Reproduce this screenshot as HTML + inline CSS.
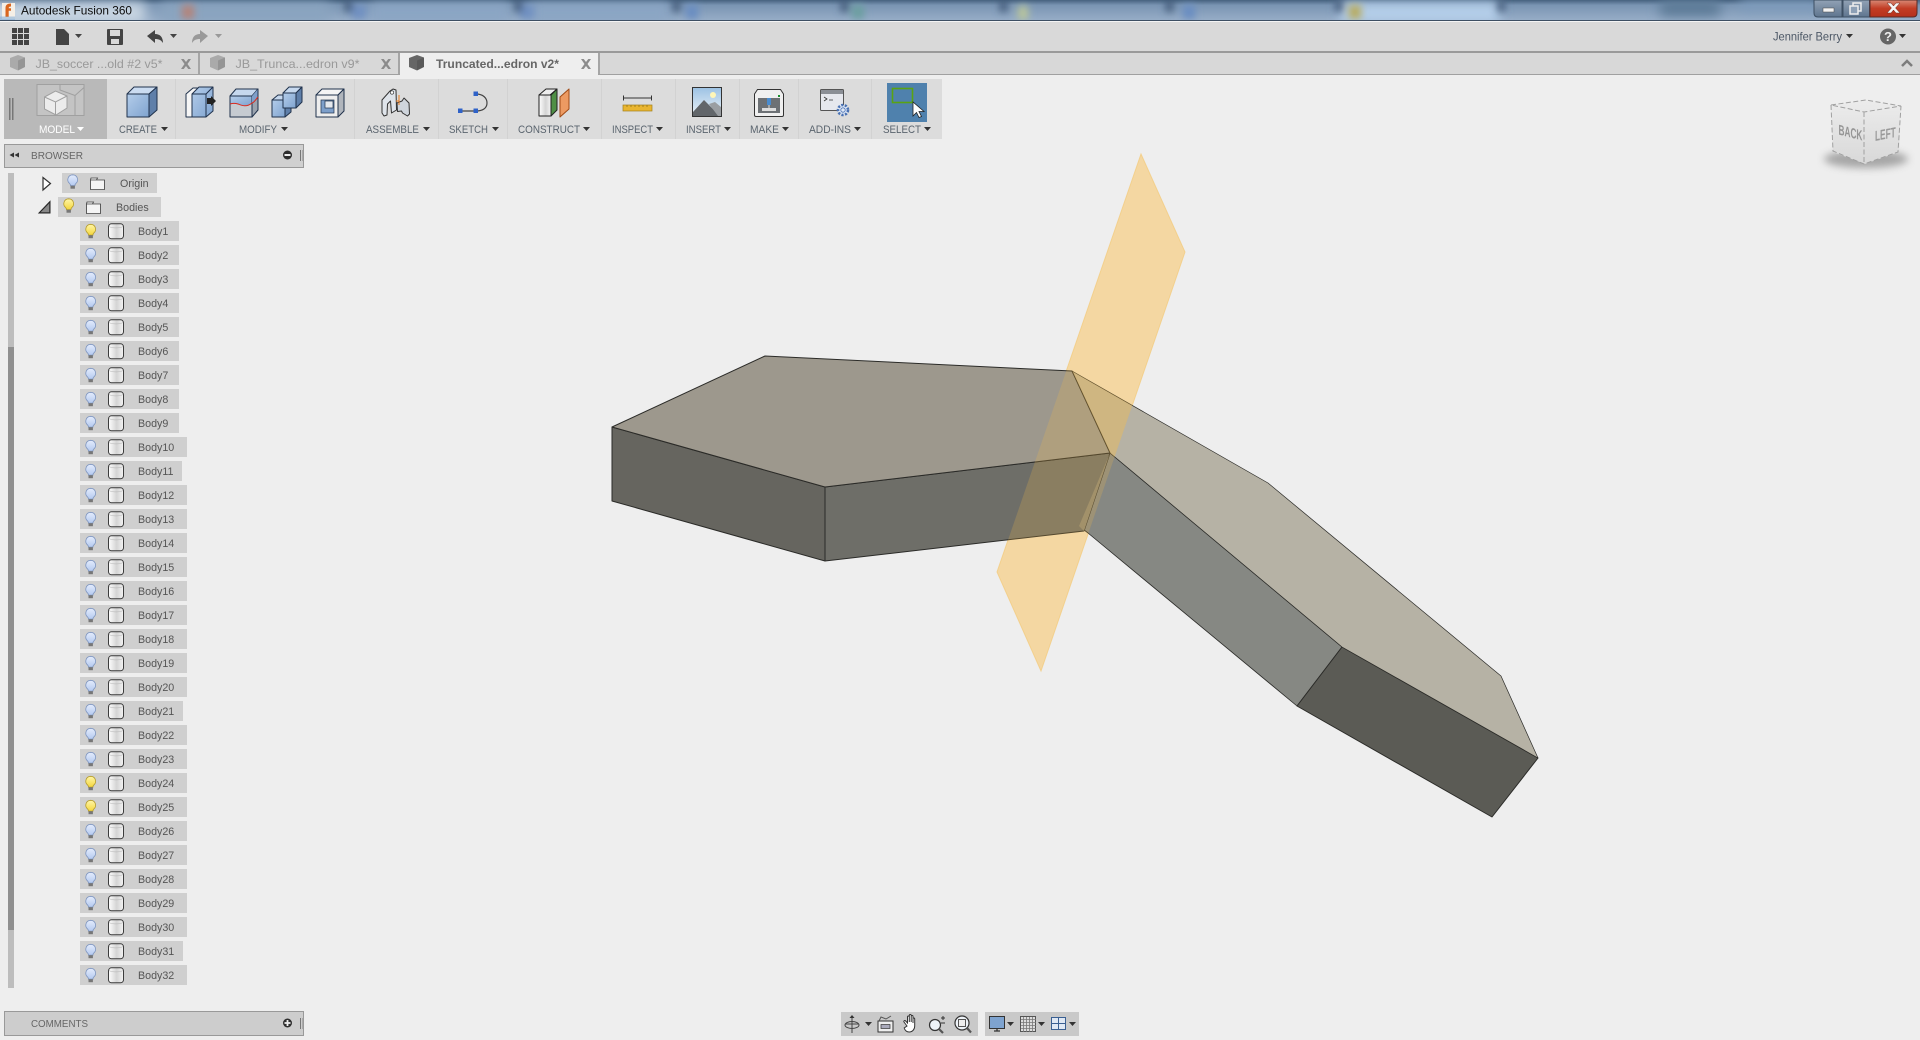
<!DOCTYPE html>
<html><head><meta charset="utf-8"><title>Autodesk Fusion 360</title>
<style>
html,body{margin:0;padding:0;background:#eee;overflow:hidden}
svg{display:block;filter:blur(.3px)}
text{font-family:"Liberation Sans",sans-serif}
.l{font-size:11px;fill:#5a646e}
.t{font-size:10.7px;fill:#555}
.r{fill:#cfcfcf}
</style></head><body>
<svg xmlns="http://www.w3.org/2000/svg" width="1920" height="1040" viewBox="0 0 1920 1040">
<defs>
<linearGradient id="fb" x1="0" y1="0" x2="1" y2="1"><stop offset="0" stop-color="#b4cdea"/><stop offset="1" stop-color="#7fa3cf"/></linearGradient>
<linearGradient id="bl" x1="0" y1="0" x2="0" y2="1"><stop offset="0" stop-color="#e4ecfc"/><stop offset="1" stop-color="#b4caf0"/></linearGradient>
<linearGradient id="yl" x1="0" y1="0" x2="0" y2="1"><stop offset="0" stop-color="#fff6a8"/><stop offset="1" stop-color="#f4d63c"/></linearGradient>
<linearGradient id="cg" x1="0" y1="0" x2="1" y2="0"><stop offset="0" stop-color="#fff"/><stop offset=".55" stop-color="#d4d4d4"/><stop offset="1" stop-color="#f4f4f4"/></linearGradient>
<linearGradient id="sky" x1="0" y1="0" x2="0" y2="1"><stop offset="0" stop-color="#9cc2e4"/><stop offset="1" stop-color="#eef4f8"/></linearGradient>
<linearGradient id="cube" x1="0" y1="0" x2="0" y2="1"><stop offset="0" stop-color="#ececec"/><stop offset="1" stop-color="#d8d8d8"/></linearGradient>
<linearGradient id="wb" x1="0" y1="0" x2="0" y2="1"><stop offset="0" stop-color="#92a2b5"/><stop offset="1" stop-color="#5f758f"/></linearGradient>
<linearGradient id="wc" x1="0" y1="0" x2="0" y2="1"><stop offset="0" stop-color="#d98a76"/><stop offset=".5" stop-color="#c23c24"/><stop offset="1" stop-color="#b5301c"/></linearGradient>
<linearGradient id="tb" x1="0" y1="0" x2="0" y2="1"><stop offset="0" stop-color="#46627f"/><stop offset=".25" stop-color="#7a95b3"/><stop offset="1" stop-color="#98aec8"/></linearGradient>
<filter id="b4" x="-30%" y="-100%" width="160%" height="300%"><feGaussianBlur stdDeviation="4"/></filter>
<filter id="b7" x="-30%" y="-100%" width="160%" height="300%"><feGaussianBlur stdDeviation="6"/></filter>
<clipPath id="tc"><rect x="0" y="0" width="1920" height="20.500"/></clipPath>
<clipPath id="rt"><polygon points="1072,371 1268,483 1501,676 1538,758 1342,647 1110,453"/></clipPath>
<g id="bb"><path d="M90.700 3.300a4.900 4.900 0 0 1 3.200 8.600c-.8.8-1 1.500-1 2.300h-4.400c0-.8-.2-1.500-1-2.300a4.900 4.900 0 0 1 3.200-8.600z" fill="url(#bl)" stroke="#7f96c0" stroke-width=".8"/><rect x="88.500" y="14.200" width="4.400" height="3" fill="#777"/></g>
<g id="by"><path d="M90.700 3.300a4.900 4.900 0 0 1 3.200 8.600c-.8.8-1 1.500-1 2.300h-4.400c0-.8-.2-1.500-1-2.300a4.900 4.900 0 0 1 3.200-8.600z" fill="url(#yl)" stroke="#b59c2c" stroke-width=".8"/><rect x="88.500" y="14.200" width="4.400" height="3" fill="#777"/></g>
<g id="cy"><rect x="108.500" y="2.800" width="15" height="15" rx="3" fill="url(#cg)" stroke="#3c3c3c" stroke-width="1"/><path d="M109 5.500c3 1.800 11 1.800 14 0" fill="none" stroke="#bbb" stroke-width=".7"/></g>
<g id="fo"><path d="M.5 2.500h6l1-2h-6.500zM.5 2.500h14v9.500h-14z" fill="#f4f4f4" stroke="#444" stroke-width=".85"/></g>
<path id="ar" d="M0 0h7l-3.500 4z"/>
<g id="tcube"><path d="M0 3l8-3 7 2.500v9.500l-7 3.500-8-3.500z" fill="currentColor"/><path d="M8 5.500l7-3v9.500l-7 3.500z" fill="#000" opacity=".12"/></g>
<path id="xx" d="M-5-5h2.700L0-2 2.300-5H5L1.500 0 5 5H2.300L0 2-2.300 5H-5L-1.500 0z"/>
</defs>

<rect width="1920" height="1040" fill="#eee"/>

<!-- title bar -->
<g clip-path="url(#tc)">
<rect width="1920" height="21" fill="url(#tb)"/>
<g filter="url(#b7)">
<rect x="-20" y="2" width="165" height="22" fill="#c8d5e2"/>
<rect x="160" y="3" width="170" height="20" fill="#8aa4c0"/>
<rect x="370" y="3" width="140" height="20" fill="#8ba6c5"/>
<rect x="530" y="3" width="140" height="20" fill="#8ba6c5"/>
<rect x="1340" y="2" width="160" height="22" fill="#b5cfea"/>
<rect x="1660" y="0" width="60" height="16" fill="#5a7894"/>
<rect x="1740" y="0" width="80" height="10" fill="#7e9cbd"/>
</g>
<g filter="url(#b4)">
<rect x="182" y="5" width="12" height="14" fill="#b58378"/>
<rect x="352" y="5" width="14" height="14" fill="#6f90c2"/>
<rect x="520" y="5" width="14" height="14" fill="#6f90c2"/>
<rect x="686" y="5" width="12" height="14" fill="#688cc2"/>
<rect x="852" y="5" width="12" height="14" fill="#6a9f9f"/>
<rect x="1018" y="6" width="10" height="14" fill="#bcc79a"/>
<rect x="1183" y="5" width="12" height="14" fill="#688cc2"/>
<rect x="1349" y="5" width="12" height="14" fill="#b8aa5c"/>
<rect x="345" y="0" width="7" height="12" fill="#3c5473"/>
<rect x="515" y="0" width="7" height="12" fill="#3c5473"/>
<rect x="673" y="0" width="7" height="12" fill="#3c5473"/>
<rect x="841" y="0" width="7" height="12" fill="#3c5473"/>
<rect x="1000" y="0" width="7" height="12" fill="#3c5473"/>
<rect x="1166" y="0" width="7" height="12" fill="#3c5473"/>
<rect x="1335" y="0" width="7" height="12" fill="#3c5473"/>
<rect x="1498" y="0" width="7" height="12" fill="#3c5473"/>
</g>
</g>
<rect y="20" width="1920" height="1" fill="#3d4f63"/>
<rect y="21" width="1920" height="1" fill="#f4f4f4"/>
<!-- app icon -->
<rect x="2" y="3" width="13" height="16" fill="#f5efe6"/>
<path d="M5.500 17V8c0-3 1.800-4.500 5.500-4.500V6.500c-1.700 0-2.300.5-2.300 1.700H11v2.600H8.700V17z" fill="#d9661f"/>
<rect x="0" y="16.500" width="15" height="3.500" fill="#8fb3d9" opacity=".65"/>
<text x="21" y="14.500" font-size="12" fill="#0c0c0c" textLength="111" lengthAdjust="spacingAndGlyphs">Autodesk Fusion 360</text>
<!-- window buttons -->
<path d="M1814 0v13q0 4 4 4h24V0z" fill="url(#wb)" stroke="#3d4f63"/>
<path d="M1843 0h26.500v17H1843z" fill="url(#wb)" stroke="#3d4f63"/>
<path d="M1870 0h47v13q0 4-4 4h-43z" fill="url(#wc)" stroke="#5b2a24"/>
<rect x="1823" y="8" width="11" height="4" fill="#f2f2f2" stroke="#444" stroke-width=".5"/>
<rect x="1853" y="3" width="8" height="8" fill="none" stroke="#eee" stroke-width="1.500"/><rect x="1850" y="6" width="8" height="8" fill="#8da0b6" stroke="#eee" stroke-width="1.500"/>
<path d="M1887 3h4l2.500 3 2.500-3h4l-4.500 5 4.500 5h-4l-2.500-3-2.500 3h-4l4.500-5z" fill="#f5f5f5" stroke="#6e2a20" stroke-width=".5"/>

<!-- quick access -->
<rect y="22" width="1920" height="30" fill="#d9d9d9"/>
<rect y="51" width="1920" height="2" fill="#9a9a9a"/>
<g fill="#444">
<rect x="12" y="28" width="5" height="5"/><rect x="18" y="28" width="5" height="5"/><rect x="24" y="28" width="5" height="5"/>
<rect x="12" y="34" width="5" height="5"/><rect x="18" y="34" width="5" height="5"/><rect x="24" y="34" width="5" height="5"/>
<rect x="12" y="40" width="5" height="5"/><rect x="18" y="40" width="5" height="5"/><rect x="24" y="40" width="5" height="5"/>
<path d="M56 29h8l5 5v11H56z"/>
<use href="#ar" x="75" y="34"/>
<path d="M107 30q0-1 1-1h14q1 0 1 1v14q0 1-1 1h-14q-1 0-1-1z"/>
<path d="M147 36l8-6v4c5 0 8 3 8 9-2-3-4-4-8-4v4z"/>
<use href="#ar" x="170" y="34"/>
</g>
<rect x="110" y="30" width="10" height="6" fill="#d9d9d9"/><rect x="111" y="39" width="8" height="5" fill="#d9d9d9"/>
<path d="M208 36l-8-6v4c-5 0-8 3-8 9 2-3 4-4 8-4v4z" fill="#999"/>
<use href="#ar" x="215" y="34" fill="#999"/>
<text x="1773" y="40.500" font-size="12" fill="#4d5866" textLength="69" lengthAdjust="spacingAndGlyphs">Jennifer Berry</text>
<use href="#ar" x="1846" y="34" fill="#333"/>
<circle cx="1888" cy="36.500" r="8" fill="#666"/>
<text x="1888" y="41" font-size="13" font-weight="bold" fill="#eee" text-anchor="middle">?</text>
<use href="#ar" x="1899" y="34" fill="#333"/>

<!-- tabs -->
<rect y="53" width="1920" height="21" fill="#d8d8d8"/>
<rect y="74" width="1920" height="1" fill="#a0a0a0"/>
<rect x="0" y="53" width="198" height="21" fill="#d6d6d6"/>
<rect x="198" y="53" width="2" height="21" fill="#a5a5a5"/>
<rect x="398" y="53" width="2" height="21" fill="#a5a5a5"/>
<rect x="400" y="53" width="198" height="22" fill="#eee"/>
<rect x="598" y="53" width="2" height="21" fill="#a5a5a5"/>
<use href="#tcube" x="10" y="55" style="color:#aaa"/>
<use href="#tcube" x="210" y="55" style="color:#aaa"/>
<use href="#tcube" x="409" y="55" style="color:#666"/>
<text x="35.500" y="68" font-size="12" fill="#999" textLength="127" lengthAdjust="spacingAndGlyphs">JB_soccer ...old #2 v5*</text>
<text x="235.500" y="68" font-size="12" fill="#999" textLength="124" lengthAdjust="spacingAndGlyphs">JB_Trunca...edron v9*</text>
<text x="436" y="68" font-size="12" font-weight="bold" fill="#666" textLength="123" lengthAdjust="spacingAndGlyphs">Truncated...edron v2*</text>
<use href="#xx" x="186" y="64" fill="#8c8c8c"/>
<use href="#xx" x="386" y="64" fill="#8c8c8c"/>
<use href="#xx" x="586" y="64" fill="#8c8c8c"/>
<path d="M1902 66l5-5 5 5" fill="none" stroke="#7d7d7d" stroke-width="2.500"/>

<!-- ribbon -->
<rect x="4" y="79" width="938" height="60" fill="#dcdcdc"/>
<rect x="4" y="79" width="103" height="60" fill="#b9b9b9"/>
<g fill="#d2d2d2"><rect x="175" y="79" width="1" height="60"/><rect x="354" y="79" width="1" height="60"/><rect x="438" y="79" width="1" height="60"/><rect x="507" y="79" width="1" height="60"/><rect x="601" y="79" width="1" height="60"/><rect x="675" y="79" width="1" height="60"/><rect x="739" y="79" width="1" height="60"/><rect x="798" y="79" width="1" height="60"/><rect x="871" y="79" width="1" height="60"/></g>
<rect x="9" y="98" width="1.500" height="22" fill="#777"/><rect x="12" y="98" width="1.500" height="22" fill="#777"/>
<!-- model icon -->
<rect x="37" y="84.500" width="47" height="31" fill="#c4c4c4" stroke="#a0a0a0"/>
<path d="M60 84v6l15 5.500v20M75 95.500l9-8" fill="none" stroke="#a0a0a0"/>
<path d="M44.500 97l11-6 11.500 5v12l-11 7-11.500-6z" fill="#ececec" stroke="#a0a0a0"/>
<path d="M44.500 97l11 5 11.500-6M55.500 102v13" fill="none" stroke="#a0a0a0"/>
<text x="39" y="133" class="l" style="fill:#fff" textLength="36" lengthAdjust="spacingAndGlyphs">MODEL</text>
<use href="#ar" x="77" y="127" fill="#fff"/>
<!-- create -->
<g stroke="#20324c" stroke-width="1" stroke-linejoin="round"><path d="M127 94l7-7h23l-8 7z" fill="#cbdcf1"/><path d="M149 94l8-7v23l-8 7z" fill="#5f7fa9"/><rect x="127" y="94" width="22" height="23" fill="url(#fb)"/></g>
<text x="119" y="133" class="l" textLength="38" lengthAdjust="spacingAndGlyphs">CREATE</text><use href="#ar" x="161" y="127" fill="#333"/>
<!-- press pull -->
<g stroke="#20324c" stroke-linejoin="round"><path d="M186 94l7-6h8v29h-15z" fill="#f6f6f6"/><path d="M192 94l7-7h14v24l-7 6h-14z" fill="url(#fb)"/><path d="M192 94h14l7-7M206 94v23" fill="none"/></g>
<path d="M207 98h4v-2l5 5-5 5v-2h-4z" fill="#222"/>
<!-- fillet -->
<g stroke="#20324c" stroke-linejoin="round"><path d="M230 96l6-7h22l-6 7z" fill="#c6d8ee"/><path d="M252 96l6-7v21l-6 7z" fill="#9aa3ae"/><rect x="230" y="96" width="22" height="21" fill="#c6cbd1"/></g>
<path d="M230.500 96.500h21v7c-6 3-9 2-13 1s-5-1-8 0z" fill="url(#fb)"/><path d="M252 96l5.500-6.500v8c-2 2-3 4-5.500 5.500z" fill="#7f9fc9"/>
<path d="M230 104c3-1 5-1 8 0s8 4 14-1c3-1 4-4 6-6" fill="none" stroke="#d92b1f" stroke-width="1"/>
<!-- combine -->
<g stroke="#20324c" stroke-linejoin="round">
<path d="M272 100l6-5h13l-6 5z" fill="#c6d8ee"/><path d="M285 100l6-5v17l-6 5z" fill="#5f7fa9"/><rect x="272" y="100" width="13" height="17" fill="url(#fb)"/>
<path d="M283 93l6-6h13l-6 6z" fill="#c6d8ee"/><path d="M296 93l6-6v15l-6 6z" fill="#5f7fa9"/><rect x="283" y="93" width="13" height="15" fill="url(#fb)"/></g>
<!-- shell -->
<g stroke="#20324c" stroke-linejoin="round"><path d="M316 95l6-6h22l-6 6z" fill="#f4f4f4"/><path d="M338 95l6-6v22l-6 6z" fill="#b0b5bc"/><rect x="316" y="95" width="22" height="22" fill="#eee"/></g>
<rect x="321" y="100" width="13" height="13" fill="#7d9fca" stroke="#20324c" stroke-width=".7"/><rect x="325" y="101" width="8" height="7" fill="#e4e8ee" stroke="#20324c" stroke-width=".7"/>
<text x="239" y="133" class="l" textLength="38" lengthAdjust="spacingAndGlyphs">MODIFY</text><use href="#ar" x="281" y="127" fill="#333"/>
<!-- assemble -->
<g stroke="#333" stroke-linejoin="round"><path d="M382 100l8-9 3-2 3 1 .5 20-5 3-1-12-3 3-.5 11-3 1-2-3z" fill="#dfe4ea"/><path d="M397 103l5-2 2-3 5 5 .5 11-2 2-5-3-1-2-4 .5z" fill="#cfd5dc"/></g>
<circle cx="392" cy="92.500" r="1.700" fill="#fff" stroke="#222" stroke-width=".6"/>
<path d="M399 95v10M396 101h3" stroke="#e87b1e" stroke-width="1" fill="none"/>
<text x="366" y="133" class="l" textLength="53" lengthAdjust="spacingAndGlyphs">ASSEMBLE</text><use href="#ar" x="423" y="127" fill="#333"/>
<!-- sketch -->
<path d="M460 111h16M476 94c7 0 11 4 11 9s-4 8-11 8" fill="none" stroke="#444" stroke-width="1.200"/>
<rect x="458" y="108.500" width="4.500" height="4.500" fill="#2f62c8"/><rect x="473.500" y="108.500" width="4.500" height="4.500" fill="#2f62c8"/><rect x="473.500" y="91.500" width="4.500" height="4.500" fill="#2f62c8"/>
<text x="449" y="133" class="l" textLength="39" lengthAdjust="spacingAndGlyphs">SKETCH</text><use href="#ar" x="492" y="127" fill="#333"/>
<!-- construct -->
<g stroke="#222" stroke-linejoin="round"><path d="M539 95l7-6h11l-7 6z" fill="#eee"/><rect x="539" y="95" width="12" height="21" fill="url(#cg)"/><path d="M551 95l6-6v21l-6 6z" fill="#4f8f45"/><path d="M560 97l9-8v20l-9 8z" fill="#ec9a62" stroke="#a04a16"/></g>
<text x="518" y="133" class="l" textLength="62" lengthAdjust="spacingAndGlyphs">CONSTRUCT</text><use href="#ar" x="583" y="127" fill="#333"/>
<!-- inspect -->
<path d="M623.500 95.500v5M651.500 95.500v5M623.500 98h28" stroke="#333" fill="none"/>
<rect x="623" y="105" width="29" height="6" fill="#e9b530" stroke="#a17f1c" stroke-width=".7"/>
<path d="M627 105v2M631 105v2M635 105v2M639 105v2M643 105v2M647 105v2" stroke="#8a6c14" stroke-width=".7"/>
<text x="612" y="133" class="l" textLength="41" lengthAdjust="spacingAndGlyphs">INSPECT</text><use href="#ar" x="656" y="127" fill="#333"/>
<!-- insert -->
<rect x="692.500" y="87.500" width="29" height="29" fill="url(#sky)" stroke="#333"/>
<path d="M693 116v-4l11-12 16 16z" fill="#62666a"/><path d="M709 104l6-2 6 5v9h-3z" fill="#9a9ea2"/>
<circle cx="713" cy="95" r="3" fill="#fff6b8"/>
<text x="686" y="133" class="l" textLength="35" lengthAdjust="spacingAndGlyphs">INSERT</text><use href="#ar" x="724" y="127" fill="#333"/>
<!-- make -->
<path d="M754.500 94l3-4.500h23l3 4.500v21q0 1.500-1.500 1.500h-26q-1.500 0-1.500-1.500z" fill="#f0f0f0" stroke="#333"/>
<rect x="758" y="98" width="22" height="15" fill="#6d7175"/>
<rect x="767" y="98" width="4" height="7" fill="#4a8ccf"/><path d="M769 105v3" stroke="#ddd"/><rect x="762" y="108" width="14" height="3" fill="#ddd"/>
<rect x="778" y="95" width="2" height="2" fill="#1a8f2e"/>
<text x="750" y="133" class="l" textLength="29" lengthAdjust="spacingAndGlyphs">MAKE</text><use href="#ar" x="782" y="127" fill="#333"/>
<!-- add-ins -->
<rect x="820.500" y="89.500" width="23" height="21" rx="1" fill="#e6e8ee" stroke="#555"/><rect x="821" y="90" width="22" height="4" fill="#8b8f96"/>
<path d="M824 97l3 2-3 2M829 100h4" fill="none" stroke="#333" stroke-width=".8"/>
<circle cx="843" cy="110" r="5" fill="#dfe8f6" stroke="#4a72b4" stroke-width="2.600" stroke-dasharray="2.200 1.400"/><circle cx="843" cy="110" r="2.200" fill="#dfe8f6" stroke="#4a72b4" stroke-width=".8"/>
<text x="809" y="133" class="l" textLength="42" lengthAdjust="spacingAndGlyphs">ADD-INS</text><use href="#ar" x="854" y="127" fill="#333"/>
<!-- select -->
<rect x="887" y="83" width="40" height="39" fill="#4f81ad"/>
<rect x="892.500" y="88.500" width="20" height="14" fill="none" stroke="#5aa312" stroke-width="1.600"/>
<path d="M913 102v14l3.500-3.500 2.500 5 2.500-1-2.500-5h5z" fill="#fff" stroke="#222" stroke-width=".8"/>
<text x="883" y="133" class="l" textLength="38" lengthAdjust="spacingAndGlyphs">SELECT</text><use href="#ar" x="924" y="127" fill="#333"/>

<!-- viewcube -->
<ellipse cx="1866" cy="159" rx="42" ry="9" fill="#888" opacity=".7" filter="url(#b4)"/>
<path d="M1831 105l35-5 35 6-2 46-34 12-32-12z" fill="url(#cube)"/>
<path d="M1831 105l35-5 35 6-37 6zM1864 112v52M1831 105l2 46 31 13 34-12 3-46" fill="none" stroke="#a0a0a0" stroke-dasharray="5 2.500" stroke-width="1"/>
<text transform="translate(1838.500 134.500) skewY(14) scale(.72 1.250)" font-size="11.500" font-weight="bold" fill="#959595">BACK</text>
<text transform="translate(1875 141) skewY(-11) scale(.72 1.250)" font-size="11.500" font-weight="bold" fill="#999">LEFT</text>

<!-- 3D model -->
<polygon points="1141,154 1185,252 1041,671 997,572" fill="#f3deb9"/>
<polygon points="1141,154 1185,252 1041,671 997,572" fill="none" stroke="#f2d398" stroke-width="1"/>
<g stroke="#2b2b28" stroke-width="1" stroke-linejoin="round">
<polygon points="1110,453 1342,647 1297,706 1088,533 1079,526" fill="#868883" stroke-width=".8"/>
<polygon points="1342,647 1538,758 1492,817 1297,706" fill="#5b5b55"/>
<polygon points="1072,371 1268,483 1501,676 1538,758 1342,647 1110,453" fill="#b6b2a5" stroke-width=".7"/>
<polygon points="612,501 612,427 825,487 825,561" fill="#66655f"/>
<polygon points="825,487 1110,453 1084,531 825,561" fill="#6e6e68"/>
<polygon points="1110,453 1084,531 1079,526" fill="#8c8674" stroke="none"/>
<polygon points="612,427 765,356 1072,371 1110,453 825,487" fill="#9d988d"/>
</g>
<polygon points="1141,154 1185,252 1041,671 997,572" fill="#fabe46" opacity=".2"/>
<polygon points="1141,154 1185,252 1041,671 997,572" fill="#fabe46" opacity=".22" clip-path="url(#rt)"/>

<!-- browser header -->
<rect x="4.500" y="144.500" width="299" height="23" fill="#d0d0d0" stroke="#999"/>
<path d="M14 152.500v5l-4.500-2.500zM19 152.500v5l-4.500-2.500z" fill="#333"/>
<text x="31" y="159" font-size="10.500" fill="#666" textLength="52" lengthAdjust="spacingAndGlyphs">BROWSER</text>
<circle cx="287.500" cy="155" r="4.500" fill="#2e2e2e"/><rect x="284.500" y="154" width="6" height="2" fill="#eee"/>
<rect x="300" y="150" width="1" height="11" fill="#777"/><rect x="302" y="150" width="1" height="11" fill="#aaa"/>
<!-- scrollbar -->
<rect x="8" y="173" width="6" height="815" fill="#bdbdbd"/>
<rect x="8" y="347" width="6" height="583" fill="#8f8f8f"/>

<!-- tree -->
<path d="M43 177.500l7.500 6-7.500 6.500z" fill="#fff" stroke="#333" stroke-width="1.200"/>
<path d="M50 201.500v11.500H39z" fill="#666" stroke="#222"/><path d="M49 204v8h-8z" fill="#888"/>
<rect x="62" y="173" width="95" height="20" class="r"/>
<rect x="58" y="197" width="103" height="20" class="r"/>
<use href="#bb" x="-18" y="171.500"/><use href="#fo" x="90" y="177.500"/>
<text x="120" y="187" class="t">Origin</text>
<use href="#by" x="-22" y="195.500"/><use href="#fo" x="86" y="201.500"/>
<text x="116" y="211" class="t">Bodies</text>

<g>
<rect x="80" y="221" width="99" height="20" class="r"/><rect x="80" y="245" width="99" height="20" class="r"/><rect x="80" y="269" width="99" height="20" class="r"/><rect x="80" y="293" width="99" height="20" class="r"/><rect x="80" y="317" width="99" height="20" class="r"/><rect x="80" y="341" width="99" height="20" class="r"/><rect x="80" y="365" width="99" height="20" class="r"/><rect x="80" y="389" width="99" height="20" class="r"/><rect x="80" y="413" width="99" height="20" class="r"/>
<rect x="80" y="437" width="107" height="20" class="r"/><rect x="80" y="461" width="102" height="20" class="r"/><rect x="80" y="485" width="107" height="20" class="r"/><rect x="80" y="509" width="107" height="20" class="r"/><rect x="80" y="533" width="107" height="20" class="r"/><rect x="80" y="557" width="107" height="20" class="r"/><rect x="80" y="581" width="107" height="20" class="r"/><rect x="80" y="605" width="107" height="20" class="r"/><rect x="80" y="629" width="107" height="20" class="r"/><rect x="80" y="653" width="107" height="20" class="r"/><rect x="80" y="677" width="107" height="20" class="r"/><rect x="80" y="701" width="103" height="20" class="r"/><rect x="80" y="725" width="107" height="20" class="r"/><rect x="80" y="749" width="107" height="20" class="r"/><rect x="80" y="773" width="107" height="20" class="r"/><rect x="80" y="797" width="107" height="20" class="r"/><rect x="80" y="821" width="107" height="20" class="r"/><rect x="80" y="845" width="107" height="20" class="r"/><rect x="80" y="869" width="107" height="20" class="r"/><rect x="80" y="893" width="107" height="20" class="r"/><rect x="80" y="917" width="107" height="20" class="r"/><rect x="80" y="941" width="103" height="20" class="r"/><rect x="80" y="965" width="107" height="20" class="r"/>
</g>
<use href="#by" y="221"/><use href="#cy" y="221"/><use href="#bb" y="245"/><use href="#cy" y="245"/><use href="#bb" y="269"/><use href="#cy" y="269"/><use href="#bb" y="293"/><use href="#cy" y="293"/><use href="#bb" y="317"/><use href="#cy" y="317"/><use href="#bb" y="341"/><use href="#cy" y="341"/><use href="#bb" y="365"/><use href="#cy" y="365"/><use href="#bb" y="389"/><use href="#cy" y="389"/><use href="#bb" y="413"/><use href="#cy" y="413"/><use href="#bb" y="437"/><use href="#cy" y="437"/><use href="#bb" y="461"/><use href="#cy" y="461"/><use href="#bb" y="485"/><use href="#cy" y="485"/><use href="#bb" y="509"/><use href="#cy" y="509"/><use href="#bb" y="533"/><use href="#cy" y="533"/><use href="#bb" y="557"/><use href="#cy" y="557"/><use href="#bb" y="581"/><use href="#cy" y="581"/><use href="#bb" y="605"/><use href="#cy" y="605"/><use href="#bb" y="629"/><use href="#cy" y="629"/><use href="#bb" y="653"/><use href="#cy" y="653"/><use href="#bb" y="677"/><use href="#cy" y="677"/><use href="#bb" y="701"/><use href="#cy" y="701"/><use href="#bb" y="725"/><use href="#cy" y="725"/><use href="#bb" y="749"/><use href="#cy" y="749"/><use href="#by" y="773"/><use href="#cy" y="773"/><use href="#by" y="797"/><use href="#cy" y="797"/><use href="#bb" y="821"/><use href="#cy" y="821"/><use href="#bb" y="845"/><use href="#cy" y="845"/><use href="#bb" y="869"/><use href="#cy" y="869"/><use href="#bb" y="893"/><use href="#cy" y="893"/><use href="#bb" y="917"/><use href="#cy" y="917"/><use href="#bb" y="941"/><use href="#cy" y="941"/><use href="#bb" y="965"/><use href="#cy" y="965"/>
<g>
<text class="t" x="138" y="235">Body1</text><text class="t" x="138" y="259">Body2</text><text class="t" x="138" y="283">Body3</text><text class="t" x="138" y="307">Body4</text><text class="t" x="138" y="331">Body5</text><text class="t" x="138" y="355">Body6</text><text class="t" x="138" y="379">Body7</text><text class="t" x="138" y="403">Body8</text><text class="t" x="138" y="427">Body9</text><text class="t" x="138" y="451">Body10</text><text class="t" x="138" y="475">Body11</text><text class="t" x="138" y="499">Body12</text><text class="t" x="138" y="523">Body13</text><text class="t" x="138" y="547">Body14</text><text class="t" x="138" y="571">Body15</text><text class="t" x="138" y="595">Body16</text><text class="t" x="138" y="619">Body17</text><text class="t" x="138" y="643">Body18</text><text class="t" x="138" y="667">Body19</text><text class="t" x="138" y="691">Body20</text><text class="t" x="138" y="715">Body21</text><text class="t" x="138" y="739">Body22</text><text class="t" x="138" y="763">Body23</text><text class="t" x="138" y="787">Body24</text><text class="t" x="138" y="811">Body25</text><text class="t" x="138" y="835">Body26</text><text class="t" x="138" y="859">Body27</text><text class="t" x="138" y="883">Body28</text><text class="t" x="138" y="907">Body29</text><text class="t" x="138" y="931">Body30</text><text class="t" x="138" y="955">Body31</text><text class="t" x="138" y="979">Body32</text>
</g>

<!-- comments -->
<rect x="4.500" y="1011.500" width="299" height="24" fill="#cdcdcd" stroke="#999"/>
<text x="31" y="1027" font-size="10.500" fill="#666" textLength="57" lengthAdjust="spacingAndGlyphs">COMMENTS</text>
<circle cx="287.500" cy="1023" r="4.500" fill="#2e2e2e"/><path d="M284.500 1023h6M287.500 1020v6" stroke="#eee" stroke-width="1.800"/>
<rect x="300" y="1018" width="1" height="11" fill="#777"/><rect x="302" y="1018" width="1" height="11" fill="#aaa"/>

<!-- nav bar -->
<rect x="841" y="1012" width="137" height="24" fill="#c9c9c9"/>
<rect x="985" y="1012" width="94" height="24" fill="#c9c9c9"/>
<!-- orbit -->
<g fill="none" stroke="#444" stroke-width="1"><path d="M852 1016v17M845 1024h14"/><ellipse cx="852" cy="1025" rx="7" ry="3.500"/></g>
<path d="M849.500 1018l2.500-3 2.500 3z" fill="#333"/>
<use href="#ar" x="865" y="1022" fill="#333"/>
<!-- look at -->
<path d="M878 1021h15v11h-15z" fill="#eee" stroke="#333"/><rect x="881" y="1024.500" width="9" height="4" fill="#aab" stroke="#333" stroke-width=".7"/><path d="M879 1021l2-4 5 2 5-3" fill="none" stroke="#555"/>
<!-- hand -->
<path d="M907 1026l-3-4c-.7-1 .7-2 1.700-1l1.800 2v-6c0-1.300 1.800-1.300 1.800 0v5-6.500c0-1.300 1.900-1.300 1.900 0v6.500-5.500c0-1.300 1.800-1.300 1.800 0v6.500-4c0-1.300 1.700-1.300 1.700 0v7c0 3-2 6-5.500 6s-4.500-2.500-5-4z" fill="#fff" stroke="#333"/>
<!-- zoom -->
<circle cx="935" cy="1025" r="5.500" fill="#eef3f8" stroke="#333" stroke-width="1.200"/><path d="M939 1029l4 4" stroke="#555" stroke-width="2.200"/>
<path d="M941 1018h4M943 1016v4M941 1023h4" stroke="#333"/>
<!-- fit -->
<circle cx="962" cy="1023" r="7" fill="#eef3f8" stroke="#333" stroke-width="1.200"/><rect x="958.500" y="1019.500" width="7" height="7" fill="#eee" stroke="#555"/><path d="M967 1028l4 4.500" stroke="#555" stroke-width="2.200"/>
<!-- display -->
<rect x="989.500" y="1016.500" width="15" height="12" fill="#7ea3cf" stroke="#333"/><path d="M994 1031h6M997 1029v2" stroke="#333" stroke-width="1.300"/>
<use href="#ar" x="1007" y="1022" fill="#333"/>
<!-- grid -->
<rect x="1020.500" y="1016.500" width="15" height="15" fill="#ddd" stroke="#555"/>
<path d="M1023.500 1017v15M1026.500 1017v15M1029.500 1017v15M1032.500 1017v15M1021 1019.500h15M1021 1022.500h15M1021 1025.500h15M1021 1028.500h15" stroke="#777" stroke-width=".8"/>
<use href="#ar" x="1038" y="1022" fill="#333"/>
<!-- viewports -->
<rect x="1051.500" y="1017.500" width="14" height="12" fill="#dfe8f4" stroke="#3a5f92"/><path d="M1058.500 1018v12M1052 1023.500h14" stroke="#3a5f92"/>
<use href="#ar" x="1069" y="1022" fill="#333"/>
</svg>
</body></html>
